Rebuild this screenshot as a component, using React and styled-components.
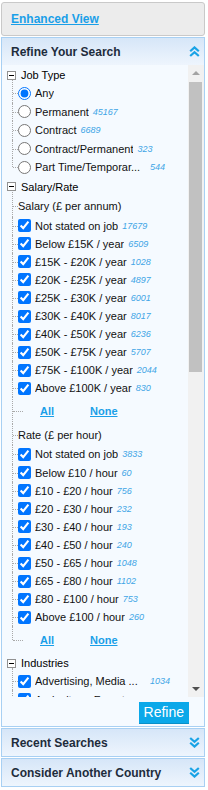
import React from 'react';
import styled, { createGlobalStyle } from 'styled-components';

const GlobalStyle = createGlobalStyle`
  html, body {
    margin: 0;
    padding: 0;
    background: #fff;
  }
  body {
    font-family: "Liberation Sans", Arial, sans-serif;
  }
`;

const Sidebar = styled.div`
  width: 204px;
  margin-left: 1px;
  padding-top: 2px;
  display: flex;
  flex-direction: column;
`;

const EnhancedBox = styled.div`
  height: 34px;
  box-sizing: border-box;
  border: 1px solid #c9c9c9;
  border-radius: 3px;
  background: #ececec;
  display: flex;
  align-items: center;
  padding-left: 9px;
`;

const Link = styled.a`
  font-size: ${p => p.$size || 12}px;
  font-weight: bold;
  color: #1a9fe8;
  text-decoration: underline;
  cursor: pointer;
`;

const Panel = styled.div`
  margin-top: 1px;
  border: 1px solid #a8d0f3;
  background: #f5faff;
`;

const PanelHeader = styled.div`
  height: 27px;
  display: flex;
  align-items: center;
  justify-content: space-between;
  padding: 0 4px 0 9px;
  background: linear-gradient(#d6e6f8, #eef5fd);
  svg {
    display: block;
  }
`;

const PanelTitle = styled.span`
  font-size: 12px;
  font-weight: bold;
  color: #1e2c3c;
`;

const ScrollArea = styled.div`
  display: flex;
  height: 632px;
`;

const Tree = styled.div`
  flex: 1;
  overflow: hidden;
  padding-top: 1px;
`;

const Track = styled.div`
  width: 16px;
  background: #f1f1f1;
  display: flex;
  flex-direction: column;
`;

const ArrowButton = styled.div`
  height: 16px;
  display: flex;
  align-items: center;
  justify-content: center;
  &::before {
    content: "";
    border-left: 4px solid transparent;
    border-right: 4px solid transparent;
    ${p => p.$down
      ? 'border-top: 4px solid #505050;'
      : 'border-bottom: 4px solid #a3a3a3;'}
  }
`;

const ThumbArea = styled.div`
  flex: 1;
`;

const Thumb = styled.div`
  margin: 1px 2px 0 1px;
  height: 290px;
  background: #c1c1c1;
`;

const Footer = styled.div`
  height: 29px;
  box-sizing: border-box;
  display: flex;
  justify-content: flex-end;
  align-items: flex-start;
  padding: 5px 15px 0 0;
`;

const RefineButton = styled.button`
  height: 22px;
  padding: 0 5px;
  border: none;
  border-bottom: 1px solid #0a8fc7;
  background: #0ba8e9;
  color: #fff;
  font-family: "Liberation Sans", Arial, sans-serif;
  font-size: 14px;
  line-height: 21px;
  cursor: pointer;
`;

const Group = styled.div`
  margin-top: ${p => (p.$first ? 0 : 1)}px;
`;

const GroupHead = styled.div`
  height: 18px;
  display: flex;
  align-items: center;
  padding-left: 5px;
  font-size: 11px;
  color: #000;
`;

const Toggle = styled.span`
  width: 9px;
  height: 9px;
  box-sizing: border-box;
  border: 1px solid #919191;
  background: #fff;
  position: relative;
  margin-right: 5px;
  &::after {
    content: "";
    position: absolute;
    left: 1px;
    right: 1px;
    top: 3px;
    height: 1px;
    background: #000;
  }
`;

const Children = styled.div`
  margin-left: 10px;
`;

const Child = styled.div`
  position: relative;
  height: ${p => p.$h}px;
  display: flex;
  align-items: center;
  padding-left: ${p => p.$indent || 6}px;
  font-size: 11px;
  color: #111;
  &::before {
    content: "";
    position: absolute;
    left: 0;
    top: 0;
    bottom: 0;
    border-left: 1px dotted #a9a9a9;
  }
  &:first-child::before {
    top: -4px;
  }
  &:last-child::before {
    bottom: 50%;
  }
  &::after {
    content: "";
    position: absolute;
    left: 1px;
    top: 50%;
    width: ${p => p.$arm || 5}px;
    border-top: 1px dotted #a9a9a9;
  }
`;

const Box = styled.input`
  width: 13px;
  height: 13px;
  margin: 0 4px 0 0;
  flex: none;
`;

const Label = styled.span`
  white-space: nowrap;
  overflow: hidden;
  ${p => (p.$fixed ? 'width: 115px; flex: none;' : '')}
`;

const Count = styled.span`
  font-size: 9px;
  font-style: italic;
  color: #3ea5e6;
  margin-left: ${p => (p.$fixed ? 0 : 4)}px;
  white-space: nowrap;
`;

const LinkCell = styled.span`
  width: 50px;
  display: inline-block;
`;

const Chevrons = ({ up }) => (
  <svg width="11" height="11" viewBox="0 0 11 11" fill="none" stroke="#19a3e6" strokeWidth="2.2">
    {up ? (
      <>
        <path d="M1.2 5.2 L5.5 1.4 L9.8 5.2" />
        <path d="M1.2 10 L5.5 6.2 L9.8 10" />
      </>
    ) : (
      <>
        <path d="M1.2 1 L5.5 4.8 L9.8 1" />
        <path d="M1.2 5.8 L5.5 9.6 L9.8 5.8" />
      </>
    )}
  </svg>
);

const jobTypes = [
  ['Any', null, true],
  ['Permanent', '45167'],
  ['Contract', '6689'],
  ['Contract/Permanent', '323'],
  ['Part Time/Temporar...', '544', false, true],
];

const salaries = [
  ['Not stated on job', '17679'],
  ['Below £15K / year', '6509'],
  ['£15K - £20K / year', '1028'],
  ['£20K - £25K / year', '4897'],
  ['£25K - £30K / year', '6001'],
  ['£30K - £40K / year', '8017'],
  ['£40K - £50K / year', '6236'],
  ['£50K - £75K / year', '5707'],
  ['£75K - £100K / year', '2044'],
  ['Above £100K / year', '830'],
];

const rates = [
  ['Not stated on job', '3833'],
  ['Below £10 / hour', '60'],
  ['£10 - £20 / hour', '756'],
  ['£20 - £30 / hour', '232'],
  ['£30 - £40 / hour', '193'],
  ['£40 - £50 / hour', '240'],
  ['£50 - £65 / hour', '1048'],
  ['£65 - £80 / hour', '1102'],
  ['£80 - £100 / hour', '753'],
  ['Above £100 / hour', '260'],
];

const industries = [
  ['Advertising, Media ...', '1034'],
  ['Agriculture, Forestry ...', '33'],
];

const CheckRow = ({ text, count, fixed }) => (
  <Child $h={18.1}>
    <Box type="checkbox" defaultChecked />
    <Label $fixed={fixed}>{text}</Label>
    <Count $fixed={fixed}>{count}</Count>
  </Child>
);

const AllNone = () => (
  <Child $h={27} $indent={28} $arm={10}>
    <LinkCell><Link $size={11}>All</Link></LinkCell>
    <LinkCell><Link $size={11}>None</Link></LinkCell>
  </Child>
);

export default function App() {
  return (
    <>
      <GlobalStyle />
      <Sidebar>
        <EnhancedBox>
          <Link>Enhanced View</Link>
        </EnhancedBox>

        <Panel>
          <PanelHeader>
            <PanelTitle>Refine Your Search</PanelTitle>
            <Chevrons up />
          </PanelHeader>

          <ScrollArea>
            <Tree>
              <Group $first>
                <GroupHead><Toggle />Job Type</GroupHead>
                <Children>
                  {jobTypes.map(([text, count, checked, fixed]) => (
                    <Child key={text} $h={18.5}>
                      <Box type="radio" name="jobtype" defaultChecked={checked} />
                      <Label $fixed={fixed}>{text}</Label>
                      {count && <Count $fixed={fixed}>{count}</Count>}
                    </Child>
                  ))}
                </Children>
              </Group>

              <Group>
                <GroupHead><Toggle />Salary/Rate</GroupHead>
                <Children>
                  <Child $h={21}>Salary (£ per annum)</Child>
                  {salaries.map(([text, count]) => (
                    <CheckRow key={text} text={text} count={count} />
                  ))}
                  <AllNone />
                  <Child $h={21}>Rate (£ per hour)</Child>
                  {rates.map(([text, count]) => (
                    <CheckRow key={text} text={text} count={count} />
                  ))}
                  <AllNone />
                </Children>
              </Group>

              <Group>
                <GroupHead><Toggle />Industries</GroupHead>
                <Children>
                  {industries.map(([text, count]) => (
                    <CheckRow key={text} text={text} count={count} fixed />
                  ))}
                </Children>
              </Group>
            </Tree>

            <Track>
              <ArrowButton />
              <ThumbArea><Thumb /></ThumbArea>
              <ArrowButton $down />
            </Track>
          </ScrollArea>

          <Footer>
            <RefineButton>Refine</RefineButton>
          </Footer>
        </Panel>

        <Panel>
          <PanelHeader>
            <PanelTitle>Recent Searches</PanelTitle>
            <Chevrons />
          </PanelHeader>
        </Panel>

        <Panel>
          <PanelHeader>
            <PanelTitle>Consider Another Country</PanelTitle>
            <Chevrons />
          </PanelHeader>
        </Panel>
      </Sidebar>
    </>
  );
}
